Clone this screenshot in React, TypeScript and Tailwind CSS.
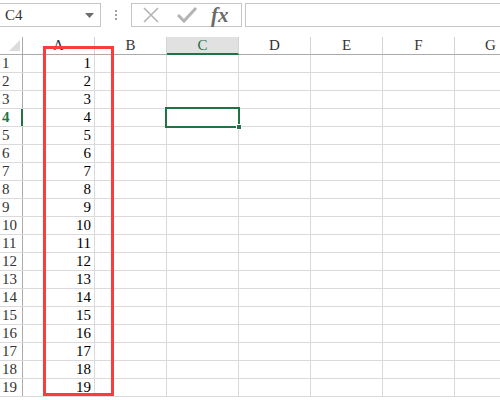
import React from "react";

const COLS = ["A", "B", "C", "D", "E", "F", "G"];
const ROWS = Array.from({ length: 19 }, (_, i) => i + 1);

function CancelIcon() {
  return (
    <svg width="20" height="20" viewBox="0 0 20 20">
      <path d="M3 3 L17 17 M17 3 L3 17" stroke="#b4b4b4" strokeWidth="1.6" fill="none" />
    </svg>
  );
}

function EnterIcon() {
  return (
    <svg width="22" height="20" viewBox="0 0 22 20">
      <path d="M2 10 L8 16 L20 3" stroke="#b4b4b4" strokeWidth="3" fill="none" />
    </svg>
  );
}

export default function App() {
  return (
    <div
      className="relative w-[500px] h-[400px] overflow-hidden bg-white text-[15px] leading-none text-black"
      style={{ fontFamily: '"Liberation Serif", "Noto Sans CJK SC", serif' }}
    >
      {/* formula bar */}
      <div className="flex items-stretch h-[24px] mt-[3px]">
        <div className="w-[101px] flex items-center justify-between border border-l-0 border-[#c6c6c6] pl-[5px] pr-[6px]">
          <span className="text-[#333]">C4</span>
          <svg width="9" height="5" viewBox="0 0 9 5">
            <path d="M0 0 L9 0 L4.5 5 Z" fill="#6e6e6e" />
          </svg>
        </div>
        <div className="w-[30px] flex flex-col items-center justify-center gap-[2px]">
          <div className="w-[2px] h-[2px] bg-[#a0a0a0]" />
          <div className="w-[2px] h-[2px] bg-[#a0a0a0]" />
          <div className="w-[2px] h-[2px] bg-[#a0a0a0]" />
        </div>
        <div className="w-[111px] flex items-center border border-[#c6c6c6] pl-[9px]">
          <CancelIcon />
          <div className="ml-[15px]">
            <EnterIcon />
          </div>
          <span className="ml-[13px] text-[21px] italic font-bold text-[#6a6a6a] leading-none">
            fx
          </span>
        </div>
        <div className="flex-1 ml-[3px] border border-r-0 border-[#c6c6c6]" />
      </div>

      {/* column headers */}
      <div className="flex h-[18px] mt-[10px] border-b border-[#ababab]">
        <div className="w-[23px] shrink-0 relative border-r border-[#ababab]">
          <svg className="absolute left-[9px] top-[3px]" width="11" height="11" viewBox="0 0 11 11">
            <path d="M11 0 L11 11 L0 11 Z" fill="#dcdcdc" />
          </svg>
        </div>
        {COLS.map((c) =>
          c === "C" ? (
            <div
              key={c}
              className="w-[72px] shrink-0 flex items-center justify-center bg-[#e1e1e1] border-r border-[#d4d4d4] border-b-2 border-b-[#217346] -mb-px text-[#217346]"
            >
              {c}
            </div>
          ) : (
            <div
              key={c}
              className="w-[72px] shrink-0 flex items-center justify-center border-r border-[#d4d4d4] text-[#333]"
            >
              {c}
            </div>
          )
        )}
      </div>

      {/* rows */}
      {ROWS.map((r) => (
        <div key={r} className="flex h-[18px] border-b border-[#dadada]">
          <div
            className={
              r === 4
                ? "w-[23px] shrink-0 flex items-center pl-[2px] border-r-2 border-[#217346] text-[#217346] font-bold"
                : "w-[23px] shrink-0 flex items-center pl-[2px] border-r border-[#ababab] text-[#333]"
            }
          >
            {r}
          </div>
          <div className="w-[72px] shrink-0 flex items-center justify-end pr-[3px] border-r border-[#dadada]">
            {r}
          </div>
          {COLS.slice(1).map((c) => (
            <div key={c} className="w-[72px] shrink-0 border-r border-[#dadada]" />
          ))}
        </div>
      ))}

      {/* active cell C4 */}
      <div className="absolute left-[165px] top-[107px] w-[75px] h-[21px] border-2 border-[#217346]" />
      <div className="absolute left-[236px] top-[124px] w-[6px] h-[6px] bg-[#217346] border border-white" />

      {/* red annotation frame around column A */}
      <div className="absolute left-[43px] top-[46px] w-[71px] h-[350px] border-[3px] border-[#fb3c3c]" />
    </div>
  );
}
